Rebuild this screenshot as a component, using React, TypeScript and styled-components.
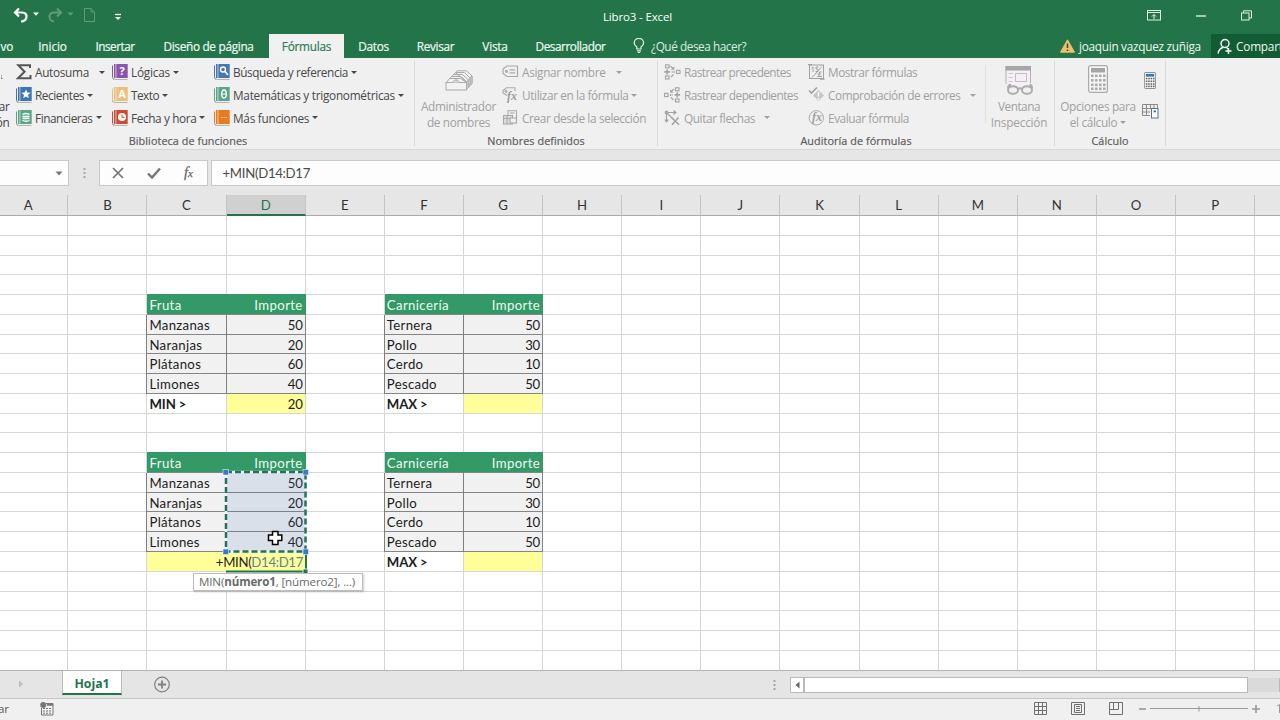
import React from 'react';
import styled, { createGlobalStyle } from 'styled-components';

const GlobalStyle = createGlobalStyle`
  * { box-sizing: border-box; }
  body { margin: 0; overflow: hidden; }
`;

const UI = "'Open Sans', 'Noto Sans', sans-serif";
const SHEET = "Lato, sans-serif";
const GREEN = '#237549';

const Window = styled.div`
  width: 1280px;
  height: 720px;
  overflow: hidden;
  display: flex;
  flex-direction: column;
  background: #e6e6e6;
  font-family: ${UI};
  font-size: 11.8px;
  color: #444;
  svg { display: block; flex: none; }
`;

const Txt = styled.span<{ $ls?: number }>`
  letter-spacing: ${p => p.$ls ?? -0.32}px;
  white-space: nowrap;
`;

/* ---------- title bar ---------- */
const TitleBar = styled.header`
  height: 34px;
  flex: none;
  background: ${GREEN};
  color: #fff;
  display: grid;
  grid-template-columns: 1fr auto 1fr;
  align-items: start;
`;
const QuickAccess = styled.div`
  display: flex;
  align-items: center;
  padding-left: 13px;
  height: 31px;
`;
const Title = styled.div`
  font-size: 11.5px;
  line-height: 34px;
  padding-right: 5px;
  white-space: nowrap;
  letter-spacing: -0.15px;
`;
const WindowButtons = styled.div`
  display: flex;
  justify-content: flex-end;
  align-items: center;
  gap: 35px;
  padding-right: 28px;
  height: 30px;
`;

/* ---------- tabs ---------- */
const TabRow = styled.nav`
  height: 24px;
  flex: none;
  display: flex;
  background: ${GREEN};
  color: #eef7f1;
`;
const Tab = styled.div<{ $w: number; $active?: boolean; $ls?: number }>`
  width: ${p => p.$w}px;
  flex: none;
  display: flex;
  align-items: center;
  justify-content: center;
  white-space: nowrap;
  letter-spacing: ${p => p.$ls ?? -0.25}px;
  background: ${p => (p.$active ? '#f1f1f1' : 'transparent')};
  color: ${p => (p.$active ? '#2f7d55' : 'inherit')};
  -webkit-text-stroke: 0.2px currentColor;
`;
const FileTab = styled(Tab)`
  justify-content: flex-end;
  padding-right: 11px;
`;
const TellMe = styled.div`
  display: flex;
  align-items: center;
  gap: 6px;
  padding-left: 14px;
  flex: 1;
  color: #dcebe2;
`;
const Account = styled.div`
  display: flex;
  align-items: center;
  gap: 4px;
  width: 151px;
`;
const Share = styled.div`
  width: 69px;
  display: flex;
  align-items: center;
  gap: 3px;
  padding-left: 6px;
  background: #125c33;
  overflow: hidden;
  white-space: nowrap;
`;

/* ---------- ribbon ---------- */
const Ribbon = styled.section`
  height: 92px;
  flex: none;
  display: flex;
  background: #f0f0f0;
  border-bottom: 1px solid #d6d6d6;
  padding-top: 3px;
`;
const Group = styled.div<{ $w: number }>`
  width: ${p => p.$w}px;
  flex: none;
  height: 85px;
  border-right: 1px solid #d8d8d8;
  display: flex;
  flex-direction: column;
`;
const GroupBody = styled.div`
  display: flex;
  height: 71px;
  flex: none;
`;
const GroupLabel = styled.div<{ $w?: number }>`
  width: ${p => (p.$w ? p.$w + 'px' : '100%')};
  height: 18px;
  flex: none;
  line-height: 18px;
  font-size: 10.8px;
  text-align: center;
  color: #5c5c5c;
  letter-spacing: 0.08px;
  -webkit-text-stroke: 0.2px currentColor;
`;
const Column = styled.div<{ $w: number; $pad?: number }>`
  width: ${p => p.$w}px;
  padding-left: ${p => p.$pad ?? 0}px;
  flex: none;
  display: flex;
  flex-direction: column;
`;
const Command = styled.div<{ $off?: boolean }>`
  height: 22.8px;
  display: flex;
  align-items: center;
  gap: 3px;
  white-space: nowrap;
  color: ${p => (p.$off ? '#a0a0a0' : '#484848')};
`;
const Arrow = styled.i<{ $gap?: number }>`
  margin-left: ${p => p.$gap ?? 0}px;
  border: solid transparent;
  border-width: 3px 3px 0;
  border-top-color: currentColor;
  display: inline-block;
  flex: none;
`;
const BigButton = styled.div<{ $w: number; $off?: boolean }>`
  width: ${p => p.$w}px;
  flex: none;
  display: flex;
  flex-direction: column;
  align-items: center;
  line-height: 15.6px;
  color: ${p => (p.$off ? '#a0a0a0' : '#484848')};
`;
const BigIcon = styled.div`
  height: 38px;
  display: flex;
  padding-top: 4px;
`;
const BigLine = styled.div`
  display: flex;
  align-items: center;
  white-space: nowrap;
`;
const InnerRule = styled.div`
  width: 1px;
  height: 58px;
  margin-top: 4px;
  background: #e0e0e0;
`;
const CalcColumn = styled.div`
  width: 18px;
  padding-top: 11px;
  display: flex;
  flex-direction: column;
  align-items: center;
  gap: 14px;
`;
const Cropped = styled.div`
  width: 16px;
  padding: 9px 6.5px 0 0;
  display: flex;
  flex-direction: column;
  align-items: flex-end;
  line-height: 15.6px;
`;
const CropDot = styled.div`
  height: 29px;
  width: 9px;
`;

/* ---------- formula bar ---------- */
const FormulaRow = styled.div`
  height: 45px;
  flex: none;
  display: flex;
  padding: 10px 0 9px;
`;
const NameBox = styled.div`
  width: 69px;
  background: #fdfdfd;
  border: 1px solid #c9c9c9;
  border-left: 0;
  display: flex;
  align-items: center;
  justify-content: flex-end;
  padding-right: 5px;
`;
const Grip = styled.div`
  width: 30px;
  display: flex;
  align-items: center;
  justify-content: center;
`;
const FormulaButtons = styled.div`
  width: 109px;
  background: #fdfdfd;
  border: 1px solid #c9c9c9;
  display: flex;
  align-items: center;
  padding-left: 12px;
  gap: 22.5px;
`;
const FormulaInput = styled.div`
  flex: 1;
  margin-left: 3px;
  background: #fdfdfd;
  border: 1px solid #c9c9c9;
  border-right: 0;
  padding-left: 10.5px;
  line-height: 25px;
  font-family: ${SHEET};
  font-size: 13.2px;
  letter-spacing: -0.3px;
  color: #4a4a4a;
`;

/* ---------- sheet ---------- */
const SheetArea = styled.main`
  position: relative;
  height: 476px;
  flex: none;
  overflow: hidden;
  background: #fff;
  border-bottom: 1px solid #b4b4b4;
`;
const SheetGrid = styled.div`
  margin-left: -10.8px;
  display: grid;
  grid-template-columns: repeat(17, 79.13px);
  grid-template-rows: 21px repeat(23, 19.77px);
`;
const ColHead = styled.div<{ $sel?: boolean }>`
  background: ${p => (p.$sel ? '#d0d0d0' : '#e6e6e6')};
  color: ${p => (p.$sel ? '#237549' : '#333')};
  border-right: 1px solid #c4c4c4;
  border-bottom: ${p => (p.$sel ? '2px solid #237549' : '1px solid #ababab')};
  text-align: center;
  font-family: ${SHEET};
  font-size: 13.2px;
  line-height: 21px;
`;
type Kind = 'blank' | 'head' | 'data' | 'key' | 'result';
const fills: Record<Kind, string> = {
  blank: 'transparent', head: '#339966', data: '#f1f1f1', key: 'transparent', result: '#ffff99',
};
const edges: Record<Kind, string> = {
  blank: 'none',
  head: '0 -1px 0 #339966',
  data: '-1px 0 0 #7f7f7f',
  key: 'none',
  result: 'none',
};
const Cell = styled.div<{ $kind: Kind; $num?: boolean }>`
  background: ${p => fills[p.$kind]};
  border-right: 1px solid ${p => (p.$kind === 'data' ? '#858585' : p.$kind === 'head' ? '#339966' : '#d6d6d6')};
  border-bottom: 1px solid ${p => (p.$kind === 'data' || p.$kind === 'head' ? '#858585' : '#d6d6d6')};
  box-shadow: ${p => edges[p.$kind]};
  color: ${p => (p.$kind === 'head' ? '#eefaf2' : '#1c1c1c')};
  font-family: ${SHEET};
  font-size: 13.2px;
  font-weight: ${p => (p.$kind === 'key' ? 700 : 400)};
  letter-spacing: ${p => (p.$kind === 'key' ? -0.1 : p.$kind === 'head' ? 0.37 : !p.$num ? 0.3 : -0.2)}px;
  line-height: 20px;
  height: 100%;
  padding: 0 2px;
  text-align: ${p => (p.$num ? 'right' : 'left')};
  white-space: nowrap;
`;
const RangeFill = styled.div`
  position: absolute;
  left: 227px;
  top: 278px;
  width: 78px;
  height: 78px;
  background: rgba(68, 114, 196, 0.13);
`;
const RangeFrame = styled.svg`
  position: absolute;
  left: 220px;
  top: 271px;
`;
const EditCell = styled.div`
  position: absolute;
  left: 147px;
  top: 357px;
  width: 158px;
  height: 19px;
  background: #ffff99;
  text-align: right;
  padding-right: 2px;
  font-family: ${SHEET};
  font-size: 13.2px;
  letter-spacing: -0.33px;
  line-height: 20px;
  color: #1c1c1c;
  em { font-style: normal; color: #5a8596; }
`;
const Hint = styled.div`
  position: absolute;
  left: 193px;
  top: 378px;
  width: 170px;
  height: 18px;
  border: 1px solid #bdbdbd;
  background: #fff;
  box-shadow: 1px 1px 2px rgba(0, 0, 0, 0.2);
  padding-left: 5px;
  line-height: 15px;
  font-size: 11.6px;
  letter-spacing: -0.15px;
  color: #6a6a6a;
  white-space: nowrap;
`;
const Pointer = styled.svg`
  position: absolute;
  left: 267px;
  top: 335px;
`;

/* ---------- bottom bars ---------- */
const SheetTabs = styled.div`
  height: 28px;
  flex: none;
  display: flex;
  background: #e5e5e5;
  border-bottom: 1px solid #c6c6c6;
`;
const TabNav = styled.div`
  width: 62px;
  padding: 9px 0 0 18px;
`;
const SheetTab = styled.div`
  width: 60px;
  height: 24px;
  background: #fff;
  border: 1px solid #b8b8b8;
  border-top: 0;
  border-bottom: 2px solid #237549;
  color: #237549;
  font-weight: 700;
  font-size: 12.3px;
  line-height: 25px;
  text-align: center;
`;
const AddSheet = styled.div`
  padding: 5px 0 0 32px;
  flex: 1;
`;
const ScrollBar = styled.div`
  display: flex;
  width: 510px;
  padding-top: 6px;
`;
const ScrollGrip = styled.div`
  width: 20px;
  padding: 1px 0 0 2.5px;
`;
const ScrollArrow = styled.div`
  width: 14px;
  height: 16px;
  background: #fff;
  border: 1px solid #b9b9b9;
  display: flex;
  align-items: center;
  justify-content: center;
`;
const ScrollThumb = styled.div`
  width: 444px;
  height: 16px;
  background: #fff;
  border: 1px solid #b9b9b9;
`;
const ScrollTrack = styled.div`
  flex: 1;
  height: 14px;
  margin-top: 1px;
  background: #dadada;
  border-right: 1px solid #b9b9b9;
`;
const StatusBar = styled.footer`
  flex: 1;
  display: flex;
  align-items: center;
  background: #f0f0f0;
  color: #555;
  padding-bottom: 2px;
`;
const StatusMode = styled.div`
  width: 40px;
  padding-right: 31px;
  display: flex;
  justify-content: flex-end;
  font-size: 11.5px;
`;
const Views = styled.div`
  flex: 1;
  display: flex;
  justify-content: flex-end;
  align-items: center;
  gap: 24px;
`;
const Zoom = styled.div`
  display: flex;
  align-items: center;
  margin-left: 16px;
  width: 141px;
`;

/* ---------- icons ---------- */
const Book = ({ c, children }: { c: string; children: React.ReactNode }) => (
  <svg width="16" height="16" viewBox="0 0 16 16">
    <path d="M.5 1.5V13c0 1.500.7 2 1.800 2" fill="none" stroke={c} />
    <path d="M.5 13.500Q.6 15.500 2.500 15.500H15.500" fill="none" stroke="#b5b5b5" />
    <rect x="2" y="0" width="1.600" height="14" fill={c} />
    <rect x="4.300" y="0" width="11.400" height="14" fill={c} />
    {children}
  </svg>
);
const Glyph = styled.text`
  font: 700 11px ${UI};
  fill: #fff;
  text-anchor: middle;
`;
const FxText = styled.text`
  font: italic 700 12px 'Liberation Serif', serif;
  letter-spacing: 0;
  fill: currentColor;
`;
const Sigma = () => (
  <svg width="16" height="16" viewBox="0 0 16 16"><path d="M14 4V1.200H2.300L8.600 7.800 2 14.200H14.500V11" fill="none" stroke="#555" strokeWidth="2" /></svg>
);
const TagIcon = () => (
  <svg width="17" height="16" viewBox="0 0 17 16" fill="none" stroke="#a9a9a9" strokeWidth="1.200">
    <path d="M5 2H15.500V12.500H5L1 9.500V5Z" /><circle cx="4.500" cy="7.300" r="1" /><path d="M7.500 5.800H13M7.500 8.800H13" />
  </svg>
);
const TagFx = () => (
  <svg width="17" height="16" viewBox="0 0 17 16" fill="none" stroke="#a9a9a9" strokeWidth="1.100" color="#9c9c9c">
    <path d="M5 8.500L1 6V3.500L4.500 .8H13V4" /><circle cx="4" cy="4.500" r=".9" /><FxText x="5" y="13" stroke="none">fx</FxText>
  </svg>
);
const CreateSel = () => (
  <svg width="17" height="16" viewBox="0 0 17 16" fill="none" stroke="#a9a9a9" strokeWidth="1.100">
    <path d="M6 5V.8H14.500V8" /><path d="M8 3H12.500" /><rect x="1.500" y="5.500" width="9" height="8.500" fill="#dedede" /><path d="M1.500 8.500H10.500M5 5.500V14" /><rect x="8" y="8" width="6.500" height="5" fill="#f0f0f0" />
  </svg>
);
const Precedents = ({ flip }: { flip?: boolean }) => (
  <svg width="17" height="16" viewBox="0 0 17 16" fill="none" stroke="#a2a2a2" strokeWidth="1.100">
    <g transform={flip ? 'translate(16.500 0) scale(-1 1)' : undefined}>
      <rect x="1.500" y=".8" width="3.500" height="3" /><rect x="1.500" y="12" width="3.500" height="3" /><path d="M.3 7.900H6M3.200 5.200V10.600" strokeWidth="1.600" />
      <rect x="12.500" y="6.300" width="3.500" height="3.200" /><path d="M6.500 2L9.500 5M7 13L9.500 10.500M7.500 8H9" /><path d="M9.800 2.800V5.300H7.300M10 7V9" />
    </g>
  </svg>
);
const RemoveArrows = () => (
  <svg width="17" height="16" viewBox="0 0 17 16" fill="none" stroke="#a2a2a2" strokeWidth="1.200">
    <path d="M2.500 2.500V11.500M.8 9.500L2.500 12 4.300 9.500M2.500 2.500H11.500M9.500 .5L11.800 2.500 9.500 4.500M2.500 2.500L9 9" /><path d="M7.500 7.500L15 14.800M14.500 7.500L8 14.800" strokeWidth="1.500" /><circle cx="2.500" cy="2.500" r="1.300" />
  </svg>
);
const ShowFormulas = () => (
  <svg width="17" height="16" viewBox="0 0 17 16" fill="none" stroke="#a2a2a2">
    <rect x="1.500" y="1" width="14" height="13.500" /><path d="M14 2.500L4 13.500M3.500 4L5 3V8M10.500 3H8V5H10V7.500H7.500M13.500 8Q11 7 11 10V12.500H9.500H14M9.500 10H13" /><path d="M0 .5H4M16.500 15H12" strokeWidth="1.500" />
  </svg>
);
const ErrorCheck = () => (
  <svg width="17" height="16" viewBox="0 0 17 16" fill="none">
    <path d="M10.500 3L16 8.500 10.500 14 5 8.500Z" fill="#c6c6c6" /><path d="M1 3.500L3.500 6 9 .5" stroke="#a2a2a2" strokeWidth="1.700" /><path d="M10.500 5V9.500M10.500 11V12.500" stroke="#fff" strokeWidth="1.500" />
  </svg>
);
const Evaluate = () => (
  <svg width="17" height="16" viewBox="0 0 17 16" fill="none" color="#a0a0a0">
    <circle cx="8.300" cy="7.800" r="7.200" stroke="#aaa" /><FxText x="4" y="11">fx</FxText>
  </svg>
);
const NameManager = () => (
  <svg width="30" height="28" viewBox="0 0 30 28" fill="#f2f2f2" stroke="#aaa">
    <path d="M11.500 7.500L13 5.800H22.500L28 11V18L22.500 24V17Z" />
    <path d="M9.500 10L11.500 7.500H20.500L26.500 13.500M7.500 12L9.500 9.500H18.500L25 15.500M5.500 14L7.500 11.500H17L23.500 17.500" fill="none" />
    <path d="M2.500 17.500L5.500 13.500H16.500L22.500 17.500" />
    <path d="M22.500 17V24.500L28 18.500V11ZM24.300 15.500V22.500M26.200 13.500V20.500" fill="#d2d2d2" />
    <rect x="2" y="17.500" width="20.500" height="7.500" /><path d="M8.500 17.500Q12 12 15.500 17.500" fill="#ddd" />
  </svg>
);
const WatchWindow = () => (
  <svg width="30" height="30" viewBox="0 0 30 30" fill="none" stroke="#aaa">
    <rect x="1.500" y="1" width="25" height="20" fill="#f5f0f5" stroke="none" /><path d="M2 1V19M26.500 1V18" stroke="#b4aeb4" />
    <rect x="1.500" y="1" width="25.500" height="4.500" fill="#a6a6a6" stroke="none" /><rect x="11.500" y="8.500" width="11" height="8" stroke="#c5bcc5" /><path d="M4.500 8.500H9M4.500 12.500H9M4.500 16.500H9" stroke="#ccc" />
    <g strokeWidth="1.900" fill="#f0f0f0"><ellipse cx="9" cy="25" rx="5" ry="3.800" /><ellipse cx="23" cy="25" rx="5" ry="3.800" /><path d="M14 24Q16 22.500 18 24M4 23.500Q4 19.800 7 19.800M28 23.500Q28 19.800 25.500 19.800" fill="none" /></g>
  </svg>
);
const Calc = ({ w, h, color, screen }: { w: number; h: number; color: string; screen: string }) => (
  <svg width={w} height={h} viewBox="0 0 20 28">
    <rect x=".6" y=".6" width="18.800" height="26.800" rx="2" fill="#f6f6f6" stroke={color} strokeWidth="1.200" />
    <rect x="3" y="3" width="14" height="4.500" fill={screen} />
    {[9.5, 14, 18.5, 22.5].map(y => [3, 7, 11, 15].map(x => <rect key={x + '-' + y} x={x} y={y} width="2.600" height="2.600" fill={color} />))}
  </svg>
);
const CalcSheet = () => (
  <svg width="17" height="16" viewBox="0 0 17 16" fill="none" stroke="#8a8a8a">
    <path d="M.5 1.500H15.500V5M.5 1.500V12.500H8M.5 5.500H15M.5 9H8M4.500 1.500V12.500M8.500 1.500V6M12 1.500V5" />
    <rect x="9.500" y="5.500" width="6.500" height="9.500" fill="#fff" stroke="#5b6f86" /><rect x="11.500" y="7.500" width="2.500" height="1.800" fill="#4472b0" stroke="none" />
  </svg>
);
const Dots = () => (
  <svg width="3" height="14" fill="#a6a6a6"><rect x=".5" y="2" width="2" height="2" /><rect x=".5" y="6" width="2" height="2" /><rect x=".5" y="10" width="2" height="2" /></svg>
);

/* ---------- data ---------- */
const cellMap: Record<string, { kind: Kind; text: string; num?: boolean }> = {};
const table = (col: number, row: number, title: string, items: [string, string][], key: string, result: string) => {
  cellMap[`${row}-${col}`] = { kind: 'head', text: title };
  cellMap[`${row}-${col + 1}`] = { kind: 'head', text: 'Importe', num: true };
  items.forEach(([n, v], i) => {
    cellMap[`${row + 1 + i}-${col}`] = { kind: 'data', text: n };
    cellMap[`${row + 1 + i}-${col + 1}`] = { kind: 'data', text: v, num: true };
  });
  if (key) {
    cellMap[`${row + 5}-${col}`] = { kind: 'key', text: key };
    cellMap[`${row + 5}-${col + 1}`] = { kind: 'result', text: result, num: true };
  }
};
const fruit: [string, string][] = [['Manzanas', '50'], ['Naranjas', '20'], ['Plátanos', '60'], ['Limones', '40']];
const meat: [string, string][] = [['Ternera', '50'], ['Pollo', '30'], ['Cerdo', '10'], ['Pescado', '50']];
table(2, 4, 'Fruta', fruit, 'MIN >', '20');
table(5, 4, 'Carnicería', meat, 'MAX >', '');
table(2, 12, 'Fruta', fruit, '', '');
table(5, 12, 'Carnicería', meat, 'MAX >', '');
const columns = [...'ABCDEFGHIJKLMNOP'.split(''), ''];

const Item = ({ icon, text, ls, arrow, off }: { icon: React.ReactNode; text: string; ls?: number; arrow?: number; off?: boolean }) => (
  <Command $off={off}>{icon}<Txt $ls={ls}>{text}</Txt>{arrow !== undefined && <Arrow $gap={arrow} />}</Command>
);

export default function App() {
  return (
    <Window>
      <GlobalStyle />
      <TitleBar>
        <QuickAccess>
          <svg width="112" height="18" viewBox="0 0 112 18" fill="none" stroke="#fff">
            <path d="M6 1.500L2 5.500 6 9.500M2.500 5.500H9Q14 6 13.500 10 13 14 8 14.500" strokeWidth="2.200" />
            <path d="M20 5.500H26L23 8.800Z" fill="#fff" stroke="none" />
            <g opacity=".28"><path d="M44 1.500L48 5.500 44 9.500M47.500 5.500H41Q36 6 36.500 10 37 14 41 14.500" strokeWidth="2" /><path d="M54.500 5.500H60.500L57.500 8.800Z" fill="#fff" stroke="none" /><path d="M71.500 1.500H78L81.500 5V14.500H71.500ZM78 1.500V5H81.500" /></g>
            <path d="M102 7.500H108" strokeWidth="1.300" /><path d="M102 10H108L105 13Z" fill="#fff" stroke="none" />
          </svg>
        </QuickAccess>
        <Title>Libro3 - Excel</Title>
        <WindowButtons>
          <svg width="14" height="11" viewBox="0 0 14 11" fill="none" stroke="#e4f0e9"><rect x=".5" y=".5" width="13" height="9.500" /><path d="M.5 2.500H13.500M7 9V4.500M5 6.500L7 4.500 9 6.500" /></svg>
          <svg width="10" height="11"><path d="M0 6H10" stroke="#fff" strokeWidth="1.200" /></svg>
          <svg width="11" height="11" viewBox="0 0 11 11" fill="none" stroke="#e4f0e9"><rect x=".5" y="3" width="7.500" height="7" /><path d="M2.500 3V.8H10.500V8H8" /></svg>
        </WindowButtons>
      </TitleBar>
      <TabRow>
        <FileTab $w={24}>vo</FileTab>
        <Tab $w={57} $ls={-0.1}>Inicio</Tab>
        <Tab $w={68} $ls={-0.5}>Insertar</Tab>
        <Tab $w={119} $ls={-0.3}>Diseño de página</Tab>
        <Tab $w={1} />
        <Tab $w={75} $active>Fórmulas</Tab>
        <Tab $w={59} $ls={-0.3}>Datos</Tab>
        <Tab $w={65} $ls={-0.35}>Revisar</Tab>
        <Tab $w={54} $ls={-0.2}>Vista</Tab>
        <Tab $w={97} $ls={-0.45}>Desarrollador</Tab>
        <TellMe>
          <svg width="12" height="16" viewBox="0 0 12 16" fill="none" stroke="#e4f0e9" strokeWidth="1.200"><path d="M3.800 11V9Q1.200 7.300 1.200 5A4.700 4.700 0 0 1 10.600 5Q10.600 7.300 8 9V11ZM4 12.800H8M4.800 14.500H7.200" /></svg>
          <Txt $ls={-0.45}>¿Qué desea hacer?</Txt>
        </TellMe>
        <Account>
          <svg width="15" height="14" viewBox="0 0 15 14"><path d="M7.500 .8L14.500 13.200H.5Z" fill="#f0c069" stroke="#f0c069" strokeLinejoin="round" /><path d="M7.500 4.500V9M7.500 10.500V12" stroke="#444" strokeWidth="1.600" /></svg>
          <Txt $ls={-0.28}>joaquin vazquez zuñiga</Txt>
        </Account>
        <Share>
          <svg width="16" height="17" viewBox="0 0 16 17" fill="none" stroke="#fff" strokeWidth="1.400"><circle cx="8" cy="5.500" r="4" /><path d="M1 15.500Q2 10.500 6 9.500M9.500 9.500L11 11M11.500 10V16M8.500 13H14.500" /></svg>
          <Txt $ls={-0.2}>Compartir</Txt>
        </Share>
      </TabRow>

      <Ribbon>
        <Group $w={415}>
          <GroupBody>
            <Cropped><CropDot><svg width="3" height="10"><path d="M0 8.500H1.500M0 5V9" stroke="#777" /></svg></CropDot><Txt>ar</Txt><Txt>ón</Txt></Cropped>
            <Column $w={96}>
              <Item icon={<Sigma />} text="Autosuma" ls={-0.3} arrow={7} />
              <Item icon={<Book c="#3d74b5"><path d="M10 2.500L11.300 5.500 14.500 5.800 12 8 12.800 11.200 10 9.500 7.200 11.200 8 8 5.500 5.800 8.700 5.500Z" fill="#fff" /></Book>} text="Recientes" ls={-0.42} arrow={0} />
              <Item icon={<Book c="#5ba58a"><path d="M6.500 4.500Q10 2.500 13.500 4.500M6.500 6.500H13.500M6.500 8.500H13.500M6.500 10.500Q10 12 13.500 10.500" stroke="#fff" strokeWidth="1.300" fill="none" /></Book>} text="Financieras" ls={-0.44} arrow={0} />
            </Column>
            <Column $w={102}>
              <Item icon={<Book c="#8b55ad"><Glyph x="10" y="11">?</Glyph></Book>} text="Lógicas" ls={-0.22} arrow={0} />
              <Item icon={<Book c="#ecc07a"><Glyph x="10" y="11">A</Glyph></Book>} text="Texto" ls={-0.5} arrow={0} />
              <Item icon={<Book c="#cf4b30"><circle cx="10" cy="7" r="4" fill="#fff" /><path d="M10 4.500V7.300H12.500" stroke="#cf4b30" fill="none" /></Book>} text="Fecha y hora" ls={-0.38} arrow={0} />
            </Column>
            <Column $w={200}>
              <Item icon={<Book c="#4676b3"><circle cx="9" cy="5.500" r="2.500" fill="none" stroke="#fff" strokeWidth="1.400" /><path d="M11 7.500L14 11" stroke="#fff" strokeWidth="1.700" /></Book>} text="Búsqueda y referencia" ls={-0.4} arrow={0} />
              <Item icon={<Book c="#5ba58a"><ellipse cx="10" cy="7" rx="2.300" ry="4" fill="none" stroke="#fff" strokeWidth="1.300" /><path d="M8 7H12" stroke="#fff" /></Book>} text="Matemáticas y trigonométricas" ls={-0.27} arrow={0} />
              <Item icon={<Book c="#ea7a1e"><path d="M7 7.500H8.500M9.300 7.500H10.800M11.600 7.500H13" stroke="#ffd9b0" /></Book>} text="Más funciones" ls={-0.26} arrow={0} />
            </Column>
          </GroupBody>
          <GroupLabel $w={376}>Biblioteca de funciones</GroupLabel>
        </Group>

        <Group $w={243}>
          <GroupBody>
            <BigButton $w={87} $off><BigIcon><NameManager /></BigIcon><BigLine><Txt $ls={-0.3}>Administrador</Txt></BigLine><BigLine><Txt>de nombres</Txt></BigLine></BigButton>
            <Column $w={155}>
              <Item off icon={<TagIcon />} text="Asignar nombre" arrow={7} />
              <Item off icon={<TagFx />} text="Utilizar en la fórmula" ls={-0.38} arrow={0} />
              <Item off icon={<CreateSel />} text="Crear desde la selección" ls={-0.36} />
            </Column>
          </GroupBody>
          <GroupLabel>Nombres definidos</GroupLabel>
        </Group>

        <Group $w={397}>
          <GroupBody>
            <Column $w={150} $pad={6}>
              <Item off icon={<Precedents />} text="Rastrear precedentes" ls={-0.56} />
              <Item off icon={<Precedents flip />} text="Rastrear dependientes" ls={-0.52} />
              <Item off icon={<RemoveArrows />} text="Quitar flechas" ls={-0.4} arrow={6} />
            </Column>
            <Column $w={177}>
              <Item off icon={<ShowFormulas />} text="Mostrar fórmulas" ls={-0.42} />
              <Item off icon={<ErrorCheck />} text="Comprobación de errores" ls={-0.4} arrow={6} />
              <Item off icon={<Evaluate />} text="Evaluar fórmula" ls={-0.42} />
            </Column>
            <InnerRule />
            <BigButton $w={66} $off><BigIcon><WatchWindow /></BigIcon><BigLine><Txt $ls={-0.5}>Ventana</Txt></BigLine><BigLine><Txt $ls={-0.2}>Inspección</Txt></BigLine></BigButton>
          </GroupBody>
          <GroupLabel>Auditoría de fórmulas</GroupLabel>
        </Group>

        <Group $w={111}>
          <GroupBody>
            <BigButton $w={86} $off><BigIcon><Calc w={20} h={28} color="#ababab" screen="#a5a5a5" /></BigIcon><BigLine><Txt>Opciones para</Txt></BigLine><BigLine><Txt>el cálculo</Txt><Arrow $gap={3} /></BigLine></BigButton>
            <CalcColumn><Calc w={12} h={17} color="#666" screen="#3d74b5" /><CalcSheet /></CalcColumn>
          </GroupBody>
          <GroupLabel>Cálculo</GroupLabel>
        </Group>
      </Ribbon>

      <FormulaRow>
        <NameBox><svg width="8" height="5"><path d="M.5 .5H7.500L4 4.500Z" fill="#777" /></svg></NameBox>
        <Grip><Dots /></Grip>
        <FormulaButtons>
          <svg width="12" height="12"><path d="M1 1L11 11M11 1L1 11" stroke="#757575" strokeWidth="1.700" /></svg>
          <svg width="14" height="12"><path d="M1 6.500L5 10.500 13 1.500" fill="none" stroke="#757575" strokeWidth="2.400" /></svg>
          <svg width="16" height="17" viewBox="0 0 16 17"><text x="1" y="12" fill="#666" fontFamily="Liberation Serif, serif" fontStyle="italic" fontSize="14.5" stroke="#666" strokeWidth=".25">f<tspan fontSize="11">x</tspan></text></svg>
        </FormulaButtons>
        <FormulaInput>+MIN(D14:D17</FormulaInput>
      </FormulaRow>

      <SheetArea>
        <SheetGrid>
          {columns.map((c, i) => <ColHead key={i} $sel={c === 'D'}>{c}</ColHead>)}
          {Array.from({ length: 23 }, (_, r) => columns.map((_c, c) => {
            const d = cellMap[`${r}-${c}`];
            return <Cell key={`${r}-${c}`} $kind={d ? d.kind : 'blank'} $num={d?.num}>{d?.text}</Cell>;
          }))}
        </SheetGrid>
        <EditCell>+MIN(<em>D14:D17</em></EditCell>
        <RangeFill />
        <RangeFrame width="96" height="110" fill="none">
          <path d="M6 105.500H86V84" stroke="#237549" strokeWidth="2" />
          <rect x="6" y="6" width="79.500" height="79.500" stroke="#eef3f8" strokeWidth="2.500" />
          <rect x="6" y="6" width="79.500" height="79.500" stroke="#24705a" strokeWidth="2.500" strokeDasharray="6 3" />
          <g fill="#3b78c9" stroke="#e8f0fa" strokeWidth=".6"><rect x="3" y="3.500" width="5.500" height="5.500" /><rect x="83" y="3.500" width="5.500" height="5.500" /><rect x="3" y="83" width="5.500" height="5.500" /><rect x="83" y="83" width="5.500" height="5.500" /></g>
          <rect x="83" y="103" width="5" height="5" fill="#237549" stroke="#fff" strokeWidth=".8" />
        </RangeFrame>
        <Pointer width="17" height="17" viewBox="0 0 17 17"><path d="M5.500 1.500H11V5H14.800V10.500H11V14.500H5.500V10.500H1.500V5H5.500Z" fill="#fff" stroke="#000" strokeWidth="1.500" /></Pointer>
        <Hint>MIN(<b>número1</b>, [número2], ...)</Hint>
      </SheetArea>

      <SheetTabs>
        <TabNav><svg width="6" height="8"><path d="M1 .5L5 4 1 7.500Z" fill="#bdbdbd" /></svg></TabNav>
        <SheetTab>Hoja1</SheetTab>
        <AddSheet><svg width="17" height="17" viewBox="0 0 17 17" fill="none" stroke="#808080"><circle cx="8" cy="8.500" r="7.300" strokeWidth="1.200" /><path d="M4 8.500H12M8 4.500V12.500" strokeWidth="1.800" /></svg></AddSheet>
        <ScrollBar>
          <ScrollGrip><Dots /></ScrollGrip>
          <ScrollArrow><svg width="5" height="8"><path d="M4.500 .5V7.500L.5 4Z" fill="#666" /></svg></ScrollArrow>
          <ScrollThumb />
          <ScrollTrack />
        </ScrollBar>
      </SheetTabs>
      <StatusBar>
        <StatusMode>ar</StatusMode>
        <svg width="14" height="14" viewBox="0 0 14 14" fill="none" stroke="#777"><path d="M1.500 6V13H13V1.500H6" /><path d="M7 2.500H13" strokeWidth="2.500" /><path d="M3 6.500H12M3 9H12M3 11.200H12" strokeDasharray="2 1" /><circle cx="3.200" cy="3" r="3" fill="#777" stroke="none" /></svg>
        <Views>
          <svg width="13" height="13" fill="none" stroke="#707070"><path d="M.5 .5H12.500V12.500H.5ZM.5 4.500H12.500M.5 8.500H12.500M4.500 .5V12.500M8.500 .5V12.500" /></svg>
          <svg width="14" height="13" fill="none" stroke="#707070"><path d="M.5 .5H13.500V12.500H.5ZM3.500 2.500H10.500V10.500H3.500ZM5 4.500H9M5 6.500H9M5 8.500H9" /></svg>
          <svg width="14" height="13" fill="none" stroke="#707070"><path d="M.5 .5H13.500V12.500H.5ZM4.500 .5V7.500M9.500 .5V7.500M.5 7.500H9.500" /></svg>
        </Views>
        <Zoom><svg width="141" height="13" fill="none" stroke="#999"><path d="M0 7H7" strokeWidth="1.600" /><path d="M11 6.500H109M60 4V9.500" /><path d="M113 7H121M117 3V11" strokeWidth="1.600" /><path d="M138 4L140.500 2.500V11" /></svg></Zoom>
      </StatusBar>
    </Window>
  );
}
